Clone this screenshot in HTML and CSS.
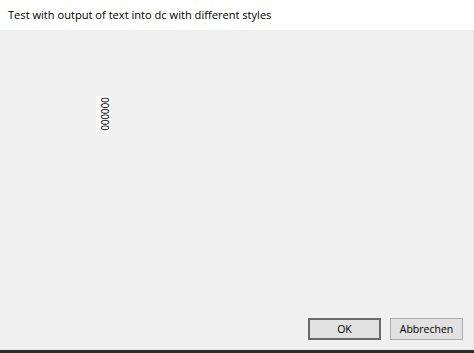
FILE: index.html
```html
<!DOCTYPE html>
<html>
<head>
<meta charset="utf-8">
<link rel="stylesheet" href="styles.css">
</head>
<body>
<div class="window">
  <div class="titlebar">Test with output of text into dc with different styles</div>
  <div class="client">
    <div class="canvas">
      <div class="vtext"><span>000000</span></div>
    </div>
    <div class="buttons">
      <button class="btn default">OK</button>
      <button class="btn">Abbrechen</button>
    </div>
  </div>
  <div class="taskbar"></div>
</div>
</body>
</html>
```

FILE: styles.css
```css
html, body {
  margin: 0;
  padding: 0;
  width: 474px;
  height: 353px;
  overflow: hidden;
  background: #f0f0f0;
}
.window {
  display: flex;
  flex-direction: column;
  width: 474px;
  height: 353px;
  font-family: "Open Sans", "Noto Sans", sans-serif;
}
.titlebar {
  height: 30px;
  flex: none;
  background: #ffffff;
  color: #000;
  font-size: 11.1px;
  line-height: 30px;
  padding-left: 8px;
  box-sizing: border-box;
}
.client {
  flex: 1;
  display: flex;
  flex-direction: column;
  background: #f0f0f0;
  border-right: 1px solid #e3e3e3;
  border-bottom: 1px solid #e6e6e6;
}
.canvas {
  flex: 1;
  padding: 66px 0 0 96px;
}
.vtext {
  width: 15px;
  height: 36px;
  background: #ffffff;
  display: flex;
  align-items: center;
  justify-content: center;
}
.vtext span {
  display: block;
  transform: rotate(90deg);
  font-family: "Liberation Sans", sans-serif;
  font-size: 10px;
  line-height: 10px;
  white-space: nowrap;
  color: #000;
}
.buttons {
  display: flex;
  justify-content: flex-end;
  gap: 9px;
  padding: 0 10px 9px 0;
}
.btn {
  width: 73px;
  height: 22px;
  margin: 0;
  padding: 0;
  background: #e1e1e1;
  border: 1px solid #adadad;
  font-family: "Open Sans", "Noto Sans", sans-serif;
  font-size: 10.5px;
  color: #000;
}
.btn.default {
  border: 2px solid #6a6a6a;
}
.taskbar {
  height: 3px;
  flex: none;
  background: #2b2b2b;
}
```
